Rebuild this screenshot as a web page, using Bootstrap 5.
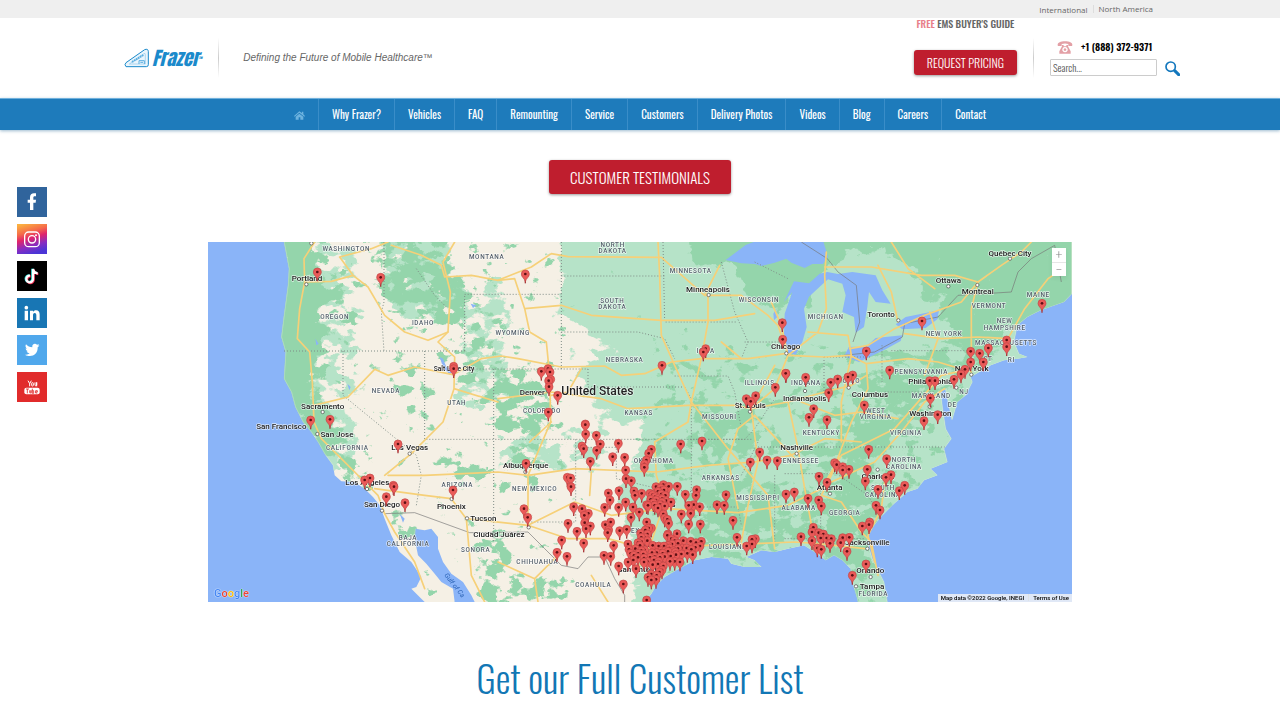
<!DOCTYPE html>
<html lang="en">
<head>
<meta charset="utf-8">
<meta name="viewport" content="width=device-width, initial-scale=1">
<title>Frazer | Customers</title>
<link href="https://cdn.jsdelivr.net/npm/bootstrap@5.3.0/dist/css/bootstrap.min.css" rel="stylesheet">
<style>
  body { font-family: "Open Sans", "Liberation Sans", sans-serif; background: #fff; color: #555; }
  a { text-decoration: none; }
  .condensed { font-family: Oswald, "Roboto Condensed", sans-serif; }
  .topbar { background: #efefef; font-size: 8px; line-height: 17px; height: 18px; padding-right: 127px; }
  .topbar a { color: #666; }
  .topbar a + a { border-left: 1px solid #ddd; margin-left: 5px; padding-left: 5px; line-height: 8px; }
  .masthead { padding: 0 100px 0 124px; height: 80px; }
  .rule { width: 1px; height: 40px; background: linear-gradient(#fff, #ccc, #fff); }
  .wordmark { font: italic 19px/20px Anton, Oswald, sans-serif; color: #1b8acb; padding-left: 2px; }
  .wordmark small { font-size: 4px; vertical-align: top; }
  .tagline { font: italic 10px/16px "Liberation Sans", Arial, sans-serif; color: #666; }
  .guide { font-size: 10px; line-height: 11px; font-weight: 500; color: #666; }
  .guide b { font-weight: 500; color: #e8808a; }
  .btn-red { background: #bf1e2e; color: #fff; border: 0; border-radius: 3px; font-weight: 300; box-shadow: 0 1px 3px rgba(0,0,0,.4); }
  .btn-red:hover { background: #a51826; color: #fff; }
  .btn-price { font-size: 12px; line-height: 25px; padding: 0 13px; margin-top: 21px; }
  .btn-big { font-size: 15px; line-height: 34px; padding: 0 21px; }
  .testimonials { padding-top: 30px; }
  .phone { font-size: 10px; line-height: 14px; font-weight: 600; color: #000; padding-left: 7px; }
  .search-box { width: 107px; height: 17px; font-size: 10px; line-height: 12px; padding: 0 2px; border: 1px solid #ccc; border-radius: 1px; color: #555; font-weight: 300; }
  .search-box::placeholder { color: #555; opacity: 1; }
  .mainnav { background: #1e7bbb; border-top: 1px solid #6fb0dc; height: 32px; box-shadow: 0 1px 3px rgba(60,120,160,.5); }
  .mainnav .nav-link { color: #fff; font-size: 11px; line-height: 31px; padding: 0 13px; }
  .mainnav .nav-item + .nav-item { border-left: 1px solid #3a8dc8; }
  .social { position: absolute; left: 17px; top: 187px; gap: 7px; }
  .social a { width: 30px; height: 30px; }
  .social svg { display: block; width: 30px; height: 30px; }
  .map-frame { max-width: 864px; }
  .map-frame > svg { display: block; width: 100%; height: auto; }
  .zoomers { top: 6px; right: 6px; width: 14px; }
  .zoomers button { width: 14px; height: 14px; border: 0; background: #fff; color: #888; font: 300 12px/12px Roboto, sans-serif; padding: 0; }
  .zoomers button + button { border-top: 1px solid #e6e6e6; }
  .glogo { left: 6px; bottom: 1px; font: 500 11px/14px Roboto, sans-serif; text-shadow: 0 0 1px #fff, 0 0 1px #fff; }
  .attrib { right: 0; bottom: 0; background: rgba(245,245,245,.8); font: 500 6px/8px Roboto, sans-serif; color: #000; padding: 0 3px; }
  .attrib a { color: #000; }
  .list-title { font-size: 37px; line-height: 56px; font-weight: 300; color: #1277b5; }
  .land-label text { font-family: Roboto, sans-serif; text-anchor: middle; paint-order: stroke; stroke: #fff; stroke-opacity: .7; stroke-width: 4px; stroke-linejoin: round; }
  .states text { font-size: 19px; letter-spacing: 2px; fill: #55606b; font-weight: 500; }
  .cities text { font-size: 24px; fill: #222; font-weight: 500; }
</style>
</head>
<body>
<div class="topbar d-flex justify-content-end align-items-center"><a href="#">International</a><a href="#">North America</a></div>

<header class="masthead d-flex align-items-center">
  <a href="#" class="d-flex align-items-center" aria-label="Frazer home">
    <svg width="26" height="20" viewBox="0 0 78 60" fill="none" stroke="#1b8acb" stroke-width="3" aria-hidden="true">
      <path d="M6 56 Q0 50 6 44 L62 5 Q72 1 73 10 V50 Q73 56 67 56Z" fill="#eaf5fc"/>
      <path d="M16 48 L60 17 Q64 15 64 19 V48Z" stroke="#8cc6e8" stroke-width="2"/>
      <path d="M24 42 L58 21" stroke="#5aaee0" stroke-width="6" stroke-dasharray="5 2"/>
      <path d="M45 48 V38 H61 V48 M49 43 H57" stroke="#5aaee0" stroke-width="3"/>
    </svg>
    <span class="wordmark">Frazer<small>™</small></span>
  </a>
  <div class="rule ms-3 me-2"></div>
  <div class="tagline ms-3">Defining the Future of Mobile Healthcare™</div>
  <div class="ms-auto align-self-start d-flex flex-column align-items-center condensed">
    <a href="#" class="guide"><b>FREE</b> EMS BUYER'S GUIDE</a>
    <button type="button" class="btn btn-red btn-price">REQUEST PRICING</button>
  </div>
  <div class="rule mx-3"></div>
  <div class="condensed">
    <div class="d-flex align-items-center gap-2 phone mb-1">
      <svg width="16" height="13" viewBox="0 0 48 39" aria-hidden="true"><path fill="#e3a0a6" fill-rule="evenodd" d="M2 13C1 5 10 1 24 1s23 4 22 12l-1 2H34v-6q-10-3-20 0v6H3zM15 12h5v4h8v-4h5v4l8 15v7H7v-7l8-15zM24 18a8 8 0 1 0 .1 0zM24 22a4 4 0 1 1-.1 0z"/></svg>
      <span>+1 (888) 372-9371</span>
    </div>
    <form class="d-flex align-items-center" onsubmit="return false">
      <input class="search-box condensed" type="search" aria-label="Search" placeholder="Search...">
      <button type="submit" class="btn p-0 border-0 ms-2 lh-1" aria-label="Submit search">
        <svg width="15" height="15" viewBox="0 0 45 45" fill="none" stroke="#1377bd"><circle cx="17" cy="17" r="14" stroke-width="5"/><path d="M29 29L41 41" stroke-width="9" stroke-linecap="round"/></svg>
      </button>
    </form>
  </div>
</header>

<nav class="mainnav condensed" aria-label="Main">
  <ul class="nav justify-content-center flex-nowrap">
    <li class="nav-item"><a class="nav-link" href="#" aria-label="Home"><svg width="11" height="9" viewBox="0 0 33 27" fill="#6db3df"><path d="M16 1L0 15l2 2L16 5l15 12 2-2-5-5V2h-4v4zM5 17L16 8l12 9v9h-9v-7h-5v7H5z"/></svg></a></li>
    <li class="nav-item"><a class="nav-link" href="#">Why Frazer?</a></li>
    <li class="nav-item"><a class="nav-link" href="#">Vehicles</a></li>
    <li class="nav-item"><a class="nav-link" href="#">FAQ</a></li>
    <li class="nav-item"><a class="nav-link" href="#">Remounting</a></li>
    <li class="nav-item"><a class="nav-link" href="#">Service</a></li>
    <li class="nav-item"><a class="nav-link" href="#">Customers</a></li>
    <li class="nav-item"><a class="nav-link" href="#">Delivery Photos</a></li>
    <li class="nav-item"><a class="nav-link" href="#">Videos</a></li>
    <li class="nav-item"><a class="nav-link" href="#">Blog</a></li>
    <li class="nav-item"><a class="nav-link" href="#">Careers</a></li>
    <li class="nav-item"><a class="nav-link" href="#">Contact</a></li>
  </ul>
</nav>

<aside class="social d-flex flex-column" aria-label="Social media">
  <a href="#" aria-label="Facebook"><svg viewBox="0 0 90 90"><path fill="#30649c" d="M0 0h90v90H0z"/><path fill="#fff" d="M39 69V47h-7v-9h7v-7c0-8 5-12 12-12h6v9h-4c-3 0-4 2-4 4v6h8l-1 9h-7v22z"/></svg></a>
  <a href="#" aria-label="Instagram"><svg viewBox="0 0 90 90"><defs><linearGradient id="ig" x1=".2" y1="0" x2=".5" y2="1"><stop offset="0" stop-color="#fbb040"/><stop offset=".3" stop-color="#f5694a"/><stop offset=".5" stop-color="#e0246c"/><stop offset=".75" stop-color="#8a2cc0"/><stop offset="1" stop-color="#4b35d6"/></linearGradient></defs><path fill="url(#ig)" d="M0 0h90v90H0z"/><g fill="none" stroke="#fff" stroke-width="4"><rect x="23" y="24" width="44" height="44" rx="12"/><circle cx="45" cy="46" r="11"/></g><circle cx="57" cy="34" r="3" fill="#fff"/></svg></a>
  <a href="#" aria-label="TikTok"><svg viewBox="0 0 90 90"><path d="M0 0h90v90H0z"/><g fill="none" stroke-width="7"><path stroke="#25d9d4" d="M46 23v30a10 10 0 1 1-9-10M46 23q2 12 14 13"/><path stroke="#fe2c55" d="M50 26v30a10 10 0 1 1-9-10M50 26q2 12 14 13"/><path stroke="#fff" d="M48 24v30a10 10 0 1 1-9-10M48 24q2 12 14 13"/></g></svg></a>
  <a href="#" aria-label="LinkedIn"><svg viewBox="0 0 90 90"><path fill="#1876b4" d="M0 0h90v90H0z"/><g fill="#fff"><circle cx="28" cy="29" r="5.500"/><path d="M23 38h10v29H23zM39 38h9v4c2-3 5-5 9-5 8 0 11 5 11 13v17H58V52c0-4-1-7-5-7s-5 3-5 7v15h-9z"/></g></svg></a>
  <a href="#" aria-label="Twitter"><svg viewBox="0 0 90 90"><path fill="#50a8ec" d="M0 0h90v90H0z"/><path fill="#fff" d="M67 31c-2 1-3 1-5 1 2-1 3-3 4-5-2 1-4 2-6 2-6-6-16-1-14 8-8 0-14-4-19-9-3 5-1 10 3 13-2 0-3-1-4-1 0 4 3 8 7 9h-4c1 4 5 6 9 6-4 3-8 5-14 4 18 11 39 0 38-22 2-1 4-3 5-6z"/></svg></a>
  <a href="#" aria-label="YouTube"><svg viewBox="0 0 90 90"><path fill="#e12b2b" d="M0 0h90v90H0z"/><g fill="none" stroke="#fff" stroke-width="3"><path d="M33 26l5 9v8M43 26l-5 9"/><rect x="44" y="32" width="5" height="10" rx="2"/><path d="M54 31v9q2 3 5-1V31v12"/></g><rect x="22" y="47" width="46" height="20" rx="6" fill="#fff"/><g fill="none" stroke="#e12b2b" stroke-width="2.500"><path d="M27 51h9M31 51v13M38 55v7q2 3 4-1v-6v9M46 50v14h4v-8h-4M55 60h6v-4h-5v7h5"/></g></svg></a>
</aside>

<main class="container-fluid text-center">
  <div class="testimonials"><button type="button" class="btn btn-red btn-big condensed">CUSTOMER TESTIMONIALS</button></div>
  <div class="map-frame position-relative mx-auto mt-5 text-start">
    <svg viewBox="0 0 2592 1080" role="img" aria-label="Map of customers in the United States">
      <defs>
        <clipPath id="land"><path id="coast" d="M228 0L243 80 240 130 228 220 220 285 233 330 228 410 250 450 262 495 285 540 310 570 330 600 350 635 375 670 380 700 400 718 440 720 470 740 495 765 515 790 530 830 550 880 575 930 610 960 640 1005 625 1035 610 1040 640 1070 650 1080H740L735 1040 700 1020 680 995 655 965 630 940 620 890 622 860 650 865 670 860 690 885 690 920 705 960 730 995 765 1020 790 1060 800 1080H1310L1330 1055 1345 1030 1370 1005 1410 982 1460 955 1510 945 1560 950 1570 965 1610 975 1660 975 1640 955 1615 945 1660 925 1700 930 1740 920 1788 910 1828 935 1853 955 1878 940 1903 955 1928 980 1933 1020 1948 1070 1950 1080H2038L2028 1020 1993 950 1978 900 1983 870 2018 825 2058 785 2098 750 2128 740 2148 715 2188 700 2168 680 2218 660 2208 620 2230 590 2213 560 2204 500 2198 450 2212 440 2232 535 2248 480 2273 460 2293 420 2288 405 2348 370 2388 355 2428 350 2458 345 2433 335 2418 300 2428 250 2458 225 2498 205 2568 180 2592 155V0Z"/></clipPath>
        <filter id="cover" x="0" y="0" width="2592" height="1080" filterUnits="userSpaceOnUse" color-interpolation-filters="sRGB">
          <feGaussianBlur in="SourceGraphic" stdDeviation="24" result="zone"/>
          <feTurbulence type="fractalNoise" baseFrequency=".022 .028" numOctaves="5" seed="8"/>
          <feColorMatrix values="0 0 0 0 0  0 0 0 0 0  0 0 0 0 0  1 0 0 0 0" result="noise"/>
          <feComposite in="zone" in2="noise" operator="arithmetic" k2="1" k3="1" k4="-.85"/>
          <feComponentTransfer result="patch"><feFuncA type="linear" slope="14"/></feComponentTransfer>
          <feFlood flood-color="#94d5ab"/><feComposite in2="patch" operator="in"/>
        </filter>
        <filter id="plain" x="0" y="0" width="2592" height="1080" filterUnits="userSpaceOnUse" color-interpolation-filters="sRGB">
          <feGaussianBlur in="SourceGraphic" stdDeviation="24" result="zone"/>
          <feTurbulence type="fractalNoise" baseFrequency=".018 .026" numOctaves="5" seed="21"/>
          <feColorMatrix values="0 0 0 0 0  0 0 0 0 0  0 0 0 0 0  1 0 0 0 0" result="noise"/>
          <feComposite in="zone" in2="noise" operator="arithmetic" k2="1" k3="1" k4="-.9"/>
          <feComponentTransfer result="patch"><feFuncA type="linear" slope="14"/></feComponentTransfer>
          <feFlood flood-color="#b6e3c8"/><feComposite in2="patch" operator="in"/>
        </filter>
        <g id="pin"><path d="M0 6V28" stroke="#a63a3c" stroke-width="4"/><path d="M0 23C-2 13-12 10-12 0a12 12 0 0 1 24 0C12 10 2 13 0 23Z" fill="#ea5a58" stroke="#c04646" stroke-width="2"/><circle r="4" fill="#5c1014"/></g>
      </defs>
      <path fill="#8ab4f8" d="M0 0h2592v1080H0z"/>
      <use href="#coast" fill="#f5f0e5"/>
      <g clip-path="url(#land)">
        <g filter="url(#plain)">
          <path opacity=".95" d="M1060-60H2700V1200H1250L1290 1000 1270 860 1230 740 1290 640 1330 540 1190 470 1130 400 1250 330 1060 230Z"/>
          <path opacity=".45" d="M870 560H1200V700H870ZM200 0H460V700H260ZM740 100H920V520H740ZM1080 330H1290V560H1150Z"/>
          <path opacity=".6" d="M520-50H720L740 200 620 260 520 200Z"/>
        </g>
        <g filter="url(#cover)">
          <path opacity=".15" d="M200-50H1100V1150H200Z"/>
          <path opacity=".7" d="M180-50H320L340 330 300 440 390 560 400 640 330 620 180 420Z"/>
          <path opacity=".36" d="M480-50H720L760 200 640 260 540 210ZM870 380H1020V560H850ZM400 620L480 700 400 740 350 650ZM690 600L860 680 880 740 740 700ZM800 900L900 850 920 1100H820ZM950 1000H1080V1080H960Z"/>
          <path opacity=".24" d="M740 60L860 220 900 440 780 480 720 300ZM900 540H1000V740H900ZM330 100H440V240H330ZM560 360H650V520H560ZM530 800L640 840V1000Z"/>
          <path opacity=".75" d="M1430-50H2700V260H2400L2300 400 2230 260 2100 60 1990 20 1860 60 1790 200 1640 180 1560 60 1440 60Z"/>
          <path opacity=".26" d="M1300 300H2300V1200H1400L1320 800Z"/>
          <path opacity=".34" d="M1470 700L1700 750 1780 900 1480 930ZM1980 380L2240 320 2120 560 1880 760 1830 700ZM1800 740L2080 700 1960 1080 1780 900ZM1480 500H1640V640H1440Z"/>
        </g>
        <g fill="#8ab4f8">
          <path d="M1553 54L1580 34 1613 9 1650-5H1845L1860 45 1845 66 1813 66 1790 78 1750 62 1735 50 1700 62 1660 72 1640 66 1600 64Z"/>
          <path d="M1728 180L1758 118 1803 124 1835 95 1858 90 1890 96 1933 90 2003 100 2023 145 2048 185 2003 180 1983 150 1978 195 1968 255 1943 272 1938 225 1903 210 1913 160 1903 125 1860 112 1840 130 1803 164 1788 200 1796 255 1783 300 1763 338 1738 332 1728 275 1730 215 1753 150Z"/>
          <path d="M1908 343L1923 314 1973 315 2003 288 2083 280 2078 297 2033 322 1953 360ZM2063 247L2093 225 2193 205 2188 232 2153 258 2083 262ZM1696 215L1704 200 1708 225 1698 235Z"/>
          <path d="M695 345L705 350 715 375 735 385 725 398 705 375ZM418 425L428 435 424 445ZM575 815L590 830 585 842ZM788 185L805 190 795 198ZM322 290L332 305 325 310Z"/>
        </g>
      </g>
      <g fill="none" stroke="#7f8c86" stroke-width="3" stroke-dasharray="3 6">
        <path d="M228 327H770M770 327V157M528 0V180L520 210 528 327M405 327V460L625 640 640 700 625 790M650 327V592H1630M770 157H1060M770 381H1140M857 381V900M1060 0V381M1140 381V435H1430M1103 592V840H930M1103 616H1225V710L1350 740 1460 750M1060 102H1370M1060 270H1290L1370 290 1400 350M1365 0L1370 240H1585M1400 402H1560L1580 450 1600 560M1430 435L1450 470V760M1447 592H1610L1640 560 1700 470M1460 795H1590L1600 850M1600 700L1650 600M1540 60L1580 210 1620 300 1600 350M1610 300H1730M1848 345V460M1848 345H1990M2022 310V420M2050 326H2290M2030 450H2180M1650 615H2210M1730 695H1900M1700 700V900M1838 700V880M1730 890H1970M1640 60L1740 110M625 80L680 160 720 200M1878 690L1980 760 2010 810"/>
      </g>
      <g fill="none" stroke="#777" stroke-width="2">
        <path d="M530 815L620 812 785 872 960 870 1010 920 1060 970 1110 980 1140 945 1190 945 1220 1010 1250 1060V1080M1780 0L1858 50 1890 90 1945 130 1955 240 1935 300M1908 340L2000 330 2083 285 2090 245 2190 225 2250 160 2410 150 2430 90 2470 50 2540 10 2560 120"/>
      </g>
      <g fill="none" stroke="#f6d078" stroke-width="5" stroke-linejoin="round" stroke-linecap="round">
        <path d="M320 0L288 50 290 120 275 200 268 290 305 330 313 420 318 540 340 590 400 650 470 720 510 760 530 815 560 870 620 960 650 1040M290 120L370 118 435 100 480 135 530 220 590 270 660 295 720 270 727 150 705 60 740 0M435 100L395 45 490 20 540 0M550 10L640 40 700 70 710 105 790 100 870 115 970 75 1030 35 1080 44 1360 46 1490 160 1600 160 1680 220 1710 250 1740 340"/>
        <path d="M318 490L420 465 500 382 540 400 620 375 735 398 820 350 880 342 930 350 1060 375 1190 372 1240 400 1310 395 1390 360 1480 350 1620 350 1730 335M720 270L690 300 740 345 738 440 705 540 610 635 530 700M870 115L920 110 950 200 1060 190 1150 220 1360 235 1520 235 1640 215M950 200L965 270 1015 300 1025 400 1028 540 960 700 960 850M870 470L1030 450 1180 470 1260 500 1440 490 1580 490 1630 500M738 440L870 480M1030 460L1080 450 1120 380"/>
        <path d="M1350 0L1355 100 1360 280 1400 370 1450 480 1440 540 1340 600 1345 700 1370 780 1330 900 1290 980M1500 160V240L1480 350 1450 480M1490 160L1535 70M1345 690L1100 680 960 700 870 690 650 700 540 700M500 740L650 760 730 770 775 830 960 850M775 830L790 1000 830 1080M960 850L1100 780 1210 820 1370 800 1590 812 1740 790 1840 740 1900 640 2060 560 2200 400 2290 380M960 850L1080 890 1200 890 1310 920 1500 910 1640 905 1760 900 1830 905 1970 920M1345 690L1500 670 1640 660 1750 640 1850 590 1960 600M1630 500L1740 480 1850 450 1930 430 1975 400M1630 500L1650 660 1620 790 1600 900M1630 500L1700 370M1740 480L1770 620 1790 740 1820 900M1740 340L1850 345 1925 340 1975 365 2100 350 2190 360 2290 390M1740 340L1830 270 1855 200 1850 100 1855 30M1800 270L1920 280 1930 340 1900 480 1900 600M1975 365L1980 440 1930 540 1870 700 1840 760 1900 780 1960 870 1990 900 2010 1000M1870 720L2000 660 2080 570 2150 480 2210 440"/>
        <path d="M1925 320L1980 310 2060 260 2150 220 2260 180 2310 120 2380 70 2440 30 2470 0M1850 75L1990 75 2140 100 2240 100 2310 120M2010 70L2050 150 2070 240M2310 120L2290 200 2290 320M2165 210L2190 290 2150 400M2090 275L2200 290 2310 285 2400 290 2450 200 2520 110 2550 90M1760 650L1640 520 1590 560 1560 650 1590 800M1740 340L1720 250 1690 180M1740 340L1700 440 1630 500M2050 0L2100 80 2180 140M2030 720L2020 800 1980 880 2000 960M1450 480L1560 620 1680 760 1700 920M965 600L1030 540M1780 480L1880 520 1960 510 2070 530M1600 350L1540 300M1150 690L1145 760M870 960L980 1010 990 1080M980 1010L1060 930M1200 1080L1150 1000"/>
      </g>
      <g class="land-label states" id="states"></g>
      <g class="land-label cities" id="cities"></g>
      <g id="pins"></g>
      <text x="708" y="1000" transform="rotate(52 708 1000)" font-family="Roboto" font-style="italic" font-size="20" fill="#2a62b5">Gulf of Ca</text>
    </svg>
    <div class="glogo position-absolute" aria-label="Google"><span style="color:#4285f4">G</span><span style="color:#ea4335">o</span><span style="color:#fbbc05">o</span><span style="color:#4285f4">g</span><span style="color:#34a853">l</span><span style="color:#ea4335">e</span></div>
    <div class="zoomers position-absolute d-flex flex-column shadow-sm"><button type="button" aria-label="Zoom in">+</button><button type="button" aria-label="Zoom out">−</button></div>
    <div class="attrib position-absolute">Map data ©2022 Google, INEGI<a href="#" class="ms-1 ps-1 border-start">Terms of Use</a></div>
  </div>
  <h1 class="list-title condensed mt-5 mb-0">Get our Full Customer List</h1>
</main>

<script>
// Label and pin positions are in map units (three to a pixel at full width).
const NS = 'http://www.w3.org/2000/svg';
const states = [['WASHINGTON',415,26],['MONTANA',836,52],['OREGON',380,232],['IDAHO',645,250],['NEVADA',534,452],['UTAH',746,490],['WYOMING',914,278],['NORTH',1214,14],['DAKOTA',1214,33],['SOUTH',1213,182],['DAKOTA',1213,202],['MINNESOTA',1448,94],['WISCONSIN',1653,180],['NEBRASKA',1250,360],['IOWA',1493,334],['COLORADO',1002,512],['KANSAS',1292,520],['MISSOURI',1534,531],['ILLINOIS',1655,430],['MICHIGAN',1853,232],['INDIANA',1794,430],['OHIO',1930,424],['PENNSYLVANIA',2140,396],['NEW YORK',2208,282],['VERMONT',2343,198],['MAINE',2491,164],['NEW',2390,244],['HAMPSHIRE',2390,264],['MASSACHUSETTS',2394,309],['CT',2340,356],['RI',2410,361],['NJ',2268,456],['DE',2233,495],['MARYLAND',2170,468],['WEST',2003,512],['VIRGINIA',2003,530],['KENTUCKY',1840,578],['VIRGINIA',2094,578],['NORTH',2088,660],['CAROLINA',2088,680],['SOUTH',2025,745],['CAROLINA',2025,764],['TENNESSEE',1772,663],['GEORGIA',1910,818],['ALABAMA',1772,804],['MISSISSIPPI',1650,774],['ARKANSAS',1538,715],['OKLAHOMA',1337,664],['LOUISIANA',1560,922],['TEXAS',1290,872],['NEW MEXICO',980,746],['ARIZONA',748,734],['CALIFORNIA',418,625],['BAJA',600,893],['CALIFORNIA',600,912],['SONORA',803,929],['CHIHUAHUA',988,967],['COAHUILA',1156,1034],['FLORIDA',1996,1063]];
const cities = [['Portland',297,116],['Salt Lake City',738,386,20],['Sacramento',344,500],['San Francisco',220,560],['San Jose',387,584],['Las Vegas',605,623],['Los Angeles',478,730],['San Diego',522,795],['Phoenix',730,800],['Tucson',826,838],['Ciudad Juárez',873,884],['Albuquerque',953,678],['Denver',973,459],['Minneapolis',1500,149],['Chicago',1733,322],['St. Louis',1627,497],['Indianapolis',1790,476],['Columbus',1986,466],['Toronto',2019,225],['Ottawa',2221,122],['Montreal',2309,157],['Québec City',2406,41],['New York',2291,387],['Philadelphia',2167,427],['Washington',2167,523],['Nashville',1766,623],['Atlanta',1865,745],['Charlotte',2010,710],['Jacksonville',1978,910],['Orlando',1987,994],['Tampa',1992,1041],['San Antonio',1294,991],['Dallas',1370,794],['Austin',1330,915],['United States',1168,460,36]];
const towns = [[295,127],[344,510],[328,576],[605,635],[477,741],[522,806],[731,771],[777,829],[962,856],[952,690],[1020,447],[1502,159],[1735,334],[1626,509],[1791,447],[1922,437],[2071,235],[2221,133],[2308,129],[2406,50],[2290,398],[2245,437],[2165,494],[1766,635],[1866,755],[2009,683],[1978,920],[1988,1005],[1944,1033],[310,4]];
const pins = '328,90 518,106 737,373 737,380 308,534 366,532 570,606 470,714 486,708 556,730 558,734 535,764 591,782 735,744 '
 + '952,96 1723,242 1724,292 1493,320 1486,330 1362,370 1020,380 1000,388 1026,390 1022,416 1028,412 1023,434 1049,460 1021,510 1132,546 1702,436 1734,394 1615,470 1643,461 1628,478 '
 + '1132,548 1133,576 1165,580 1122,612 1127,620 1177,606 1166,625 1231,604 1214,644 1250,646 1147,658 1330,622 1322,634 1315,654 1309,666 1309,676 1418,606 1482,597 1627,660 1655,630 1677,654 1708,656 954,664 1253,684 1254,710 1270,716 1078,706 1088,708 1089,734 1201,753 1206,774 1233,746 1278,747 1281,760 1301,754 1097,794 1122,800 1129,820 1141,814 1190,796 1232,796 1253,780 1275,795 948,800 959,826 1080,844 1130,842 1134,860 1147,852 1192,848 1208,840 1202,864 1199,872 1235,866 1256,862 1107,868 1061,894 1127,903 1217,910 1047,931 1077,943 1188,940 1208,943 1232,972 1246,1026 1316,1074 '
 + '1408,733 1382,733 1366,728 1344,734 1350,748 1326,754 1360,756 1328,772 1344,774 1362,780 1372,760 1340,790 1370,792 1320,790 1334,758 1342,764 1352,768 1356,788 1336,782 1350,798 1362,770 1368,744 1358,738 1374,776 1294,810 1316,788 1389,780 1432,757 1420,816 1466,743 1464,760 1442,790 1457,788 1475,794 1448,814 1442,846 1477,846 1527,788 1549,790 1554,758 1575,835 1587,886 1269,826 1316,840 1330,858 1312,864 1298,874 1310,886 1366,816 1378,832 1370,828 1382,844 1380,876 1407,875 1378,880 '
 + '1260,906 1263,922 1282,920 1296,910 1290,934 1290,902 1300,898 1318,896 1334,910 1352,912 1368,912 1380,910 1392,906 1410,904 1426,896 1448,898 1464,902 1480,898 1360,926 1372,926 1346,932 1364,934 1380,928 1396,926 1410,920 1422,918 1436,918 1450,922 1462,916 1476,912 1260,960 1276,954 1290,946 1308,948 1326,946 1340,944 1356,946 1370,944 1388,942 1404,938 1420,936 1438,934 1454,938 1308,960 1334,968 1350,966 1366,972 1354,990 1346,1000 1330,1014 1344,1012 1284,980 1416,960 1400,958 1386,958 1318,958 1362,984 1332,932 1310,924 1278,940 1300,886 1318,876 1322,858 1300,926 1306,936 1268,934 1390,890 1400,896 1384,918 1402,930 1338,954 1352,958 1320,1006 1330,996 1616,912 1632,892 1642,890 1632,906 1734,756 '
 + '1733,394 1793,406 1868,421 1889,411 1862,452 1920,405 1934,399 1975,327 2045,384 2142,237 2502,184 2396,294 2396,314 2341,318 2315,334 2288,328 2288,360 2326,360 2271,382 2259,396 2238,412 2165,416 2181,416 2167,468 2189,518 2148,536 1969,489 1817,500 1803,526 1857,533 '
 + '1982,622 2036,650 1880,662 1886,668 1904,674 1923,682 1904,684 1978,682 1972,717 2034,706 2049,698 1833,703 1857,721 2010,742 2090,730 2074,746 1759,750 1800,769 1832,774 1840,792 2004,790 2016,804 1985,840 1963,852 1983,848 1779,884 1816,856 1812,870 1832,872 1846,876 1812,896 1838,888 1856,888 1870,890 1866,904 1904,887 1924,886 1898,902 1828,918 1840,922 1917,928 1974,966 1933,1000';
function add(parent, tag, attrs, text) {
  const n = document.createElementNS(NS, tag);
  for (const k in attrs) n.setAttribute(k, attrs[k]);
  if (text) n.textContent = text;
  document.getElementById(parent).appendChild(n);
  return n;
}
states.forEach(([t, x, y]) => add('states', 'text', { x, y }, t));
towns.forEach(([cx, cy]) => add('cities', 'circle', { cx, cy, r: 5, fill: '#fff', stroke: '#444', 'stroke-width': 2 }));
cities.forEach(([t, x, y, s]) => { const n = add('cities', 'text', { x, y }, t); if (s) n.style.fontSize = s + 'px'; });
pins.split(' ').map(p => p.split(',').map(Number)).sort((a, b) => a[1] - b[1])
  .forEach(([x, y]) => add('pins', 'use', { href: '#pin', x, y }));
</script>
<script src="https://cdn.jsdelivr.net/npm/bootstrap@5.3.0/dist/js/bootstrap.bundle.min.js"></script>
</body>
</html>
